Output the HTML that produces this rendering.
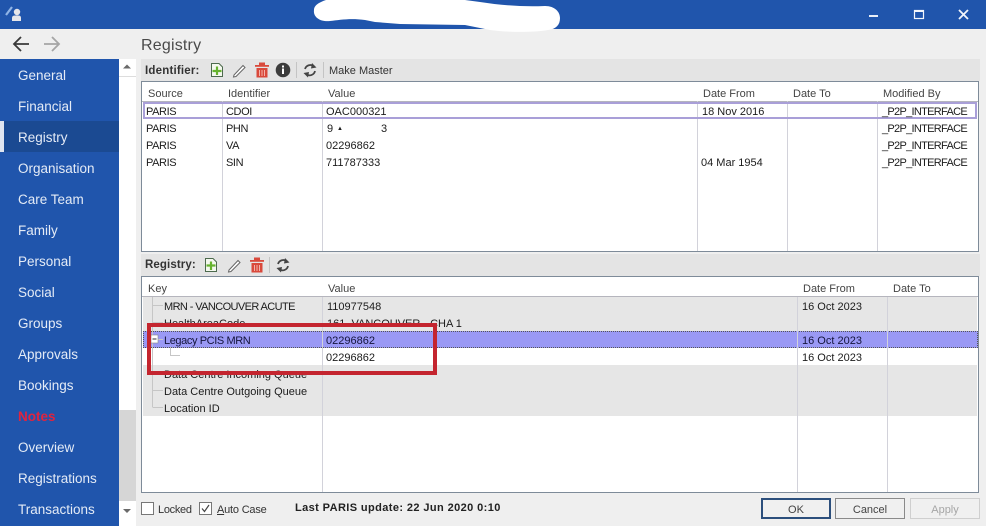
<!DOCTYPE html>
<html><head><meta charset="utf-8"><style>
html,body{margin:0;padding:0}
body{width:986px;height:526px;overflow:hidden;position:relative;background:#efefef;font-family:"Liberation Sans",sans-serif;font-size:11px;color:#1c1c1c}
.a,.t{position:absolute}
.t{white-space:nowrap;line-height:13px;margin-top:1px}
.c{letter-spacing:-.4px}
.m{letter-spacing:-.7px}
.n{position:absolute;left:18px;color:#e4ebf6;font-size:13.5px;line-height:16px;white-space:nowrap}
.h{color:#444}
.l{position:absolute;width:1px;background:#d2d2da}
.g{position:absolute;background:#e6e6e6;left:143px;width:834px}
.b{position:absolute;box-sizing:border-box;text-align:center;font-size:11px;background:#f0f0f0}
svg{position:absolute;overflow:visible}
</style></head><body>
<div class="a" style="left:0;top:0;width:986px;height:29px;background:#2055ac"></div>
<svg style="left:0;top:0" width="986" height="34">
<path d="M314 10 C314 5 320 2 326 0 L465 0 L480 2 C500 5 520 7 545 6 C555 6 560 12 560 18 C560 25 556 29 548 30 C530 33 505 32 490 30 L465 25 L400 24 L375 22 L365 20 C350 18 340 20 330 21 C320 22 313 17 314 10 Z" fill="#fff"/>
<path d="M6 15 L12 7" stroke="#8fb4e6" stroke-width="2.2"/>
<circle cx="17" cy="12" r="3.2" fill="#e6e6ea"/><path d="M12 21 V18 Q12 15.500 15 15.500 H18.500 Q21 15.500 21 18 V21 Z" fill="#e6e6ea"/>
<path d="M869 16 H878" stroke="#e8eef8" stroke-width="2"/>
<rect x="914.500" y="10.500" width="9" height="8" fill="none" stroke="#f2f5fb" stroke-width="1.200"/><path d="M914 11 H924" stroke="#f2f5fb" stroke-width="2"/>
<path d="M959 10 L968 19 M968 10 L959 19" stroke="#f2f5fb" stroke-width="1.800"/>
<path d="M29 44 H14 M21 37 L14 44 L21 51" fill="none" stroke="#3a3a3a" stroke-width="1.800"/>
<path d="M59 44 H44 M52 37 L59 44 L52 51" fill="none" stroke="#a5a5a5" stroke-width="1.800"/>
</svg>
<div class="t" style="left:141px;top:36px;font-size:16px;line-height:18px;color:#4a4a4a;letter-spacing:.2px">Registry</div>

<div class="a" style="left:0;top:59px;width:119px;height:467px;background:#2055ac"></div>
<div class="a" style="left:0;top:121px;width:119px;height:31px;background:#1b4a92"></div>
<div class="a" style="left:0;top:121px;width:4px;height:31px;background:#dfe5f0"></div>
<div class="n" style="top:68px">General</div>
<div class="n" style="top:99px">Financial</div>
<div class="n" style="top:130px">Registry</div>
<div class="n" style="top:161px">Organisation</div>
<div class="n" style="top:192px">Care Team</div>
<div class="n" style="top:223px">Family</div>
<div class="n" style="top:254px">Personal</div>
<div class="n" style="top:285px">Social</div>
<div class="n" style="top:316px">Groups</div>
<div class="n" style="top:347px">Approvals</div>
<div class="n" style="top:378px">Bookings</div>
<div class="n" style="top:409px;color:#e0243f;font-weight:bold">Notes</div>
<div class="n" style="top:440px">Overview</div>
<div class="n" style="top:471px">Registrations</div>
<div class="n" style="top:502px">Transactions</div>

<div class="a" style="left:119px;top:59px;width:17px;height:467px;background:#fff"></div>
<div class="a" style="left:119px;top:76px;width:17px;height:1px;background:#ddd"></div>
<div class="a" style="left:119px;top:410px;width:17px;height:91px;background:#d6d6d6"></div>
<svg style="left:119px;top:59px" width="17" height="467"><path d="M4 9.500 L8 5.500 L12 9.500 Z" fill="#6a6a6a"/><path d="M4 450 H12 L8 454 Z" fill="#6a6a6a"/></svg>

<!-- Identifier toolbar -->
<div class="a" style="left:141px;top:59px;width:839px;height:22px;background:#e4e4e4"></div>
<div class="t" style="left:145px;top:64px;font-weight:bold;color:#333;font-size:11.5px;letter-spacing:.2px">Identifier:</div>
<svg style="left:0;top:0" width="986" height="300">
<path d="M211.500 63.500 H219 L222.500 67 V76.500 H211.500 Z" fill="#f4f8ee" stroke="#4d6a4d"/>
<path d="M217 66.500 V75 M212.500 71 H221.500" stroke="#66b32e" stroke-width="2.200"/>
<path d="M234 75 L243 65.500 L245 67.500 L236 76.500 L233.500 77 Z" fill="#fff" stroke="#666"/>
<rect x="255" y="65" width="14" height="1.800" fill="#d9493b"/><rect x="259" y="62.500" width="6" height="2.500" fill="#d9493b"/>
<path d="M256.500 68 H267.500 V77.500 H256.500 Z" fill="#d9493b"/><path d="M259.500 70 V76 M262 70 V76 M264.500 70 V76" stroke="#f3b2aa"/>
<circle cx="283" cy="70" r="7.300" fill="#3c3c3c"/><rect x="282" y="68.500" width="2" height="5.500" fill="#fff"/><rect x="282" y="65.500" width="2" height="2" fill="#fff"/>
<path d="M296.500 62 V78 M323.500 62 V78" stroke="#c4c4c4"/>
<g fill="none" stroke="#444" stroke-width="1.800"><path d="M305 69 A5.500 5.500 0 0 1 314 66.500"/><path d="M315 71 A5.500 5.500 0 0 1 306 74"/></g>
<path d="M312 63 L316.500 67.500 L311 68.500 Z M308 77.500 L303.500 73 L309 72 Z" fill="#444"/>
</svg>
<div class="t" style="left:329px;top:64px;color:#333">Make Master</div>

<!-- Table 1 -->
<div class="a" style="left:141px;top:81px;width:838px;height:171px;box-sizing:border-box;border:1px solid #7e8b99;background:#fff"></div>
<div class="a" style="left:142px;top:101px;width:836px;height:1px;background:#b5b5bd"></div>
<div class="l" style="left:222px;top:101px;height:150px"></div>
<div class="l" style="left:322px;top:101px;height:150px"></div>
<div class="l" style="left:697px;top:101px;height:150px"></div>
<div class="l" style="left:787px;top:101px;height:150px"></div>
<div class="l" style="left:877px;top:101px;height:150px"></div>
<div class="a" style="left:143px;top:102px;width:834px;height:17px;box-sizing:border-box;border:2px solid #a99fd8"></div>
<div class="t h" style="left:148px;top:87px">Source</div><div class="t h" style="left:228px;top:87px">Identifier</div><div class="t h" style="left:328px;top:87px">Value</div><div class="t h" style="left:703px;top:87px">Date From</div><div class="t h" style="left:793px;top:87px">Date To</div><div class="t h" style="left:883px;top:87px">Modified By</div>
<div class="t c" style="left:146px;top:105px">PARIS</div><div class="t c" style="left:226px;top:105px">CDOI</div><div class="t" style="left:326px;top:105px">OAC000321</div><div class="t" style="left:702px;top:105px">18 Nov 2016</div><div class="t m" style="left:882px;top:105px">_P2P_INTERFACE</div>
<div class="t c" style="left:146px;top:122px">PARIS</div><div class="t c" style="left:226px;top:122px">PHN</div><div class="t" style="left:327px;top:122px">9</div><div class="t" style="left:337px;top:122px;font-size:6px">▲</div><div class="t" style="left:381px;top:122px">3</div><div class="t m" style="left:882px;top:122px">_P2P_INTERFACE</div>
<div class="t c" style="left:146px;top:139px">PARIS</div><div class="t c" style="left:226px;top:139px">VA</div><div class="t" style="left:326px;top:139px">02296862</div><div class="t m" style="left:882px;top:139px">_P2P_INTERFACE</div>
<div class="t c" style="left:146px;top:156px">PARIS</div><div class="t c" style="left:226px;top:156px">SIN</div><div class="t" style="left:326px;top:156px">711787333</div><div class="t" style="left:701px;top:156px">04 Mar 1954</div><div class="t m" style="left:882px;top:156px">_P2P_INTERFACE</div>

<!-- Registry toolbar -->
<div class="a" style="left:141px;top:254px;width:839px;height:22px;background:#e4e4e4"></div>
<svg style="left:0;top:0;z-index:2" width="986" height="300">
<path d="M205.500 258.500 H213 L216.500 262 V271.500 H205.500 Z" fill="#f4f8ee" stroke="#4d6a4d"/>
<path d="M211 261.500 V270 M206.500 265.500 H215.500" stroke="#66b32e" stroke-width="2.200"/>
<path d="M229 270 L238 260.500 L240 262.500 L231 271.500 L228.500 272 Z" fill="#fff" stroke="#666"/>
<rect x="250" y="260" width="14" height="1.800" fill="#d9493b"/><rect x="254" y="257.500" width="6" height="2.500" fill="#d9493b"/>
<path d="M251.500 263 H262.500 V272.500 H251.500 Z" fill="#d9493b"/><path d="M254.500 265 V271 M257 265 V271 M259.500 265 V271" stroke="#f3b2aa"/>
<path d="M269.500 257 V273" stroke="#c4c4c4"/>
<g fill="none" stroke="#444" stroke-width="1.800"><path d="M278 264 A5.500 5.500 0 0 1 287 261.500"/><path d="M288 266 A5.500 5.500 0 0 1 279 269"/></g>
<path d="M285 258 L289.500 262.500 L284 263.500 Z M281 272.500 L276.500 268 L282 267 Z" fill="#444"/>
</svg>
<div class="t" style="left:145px;top:258px;font-weight:bold;color:#333;font-size:11.5px;letter-spacing:.1px">Registry:</div>

<!-- Table 2 -->
<div class="a" style="left:141px;top:276px;width:838px;height:217px;box-sizing:border-box;border:1px solid #7e8b99;background:#fff"></div>
<div class="a" style="left:142px;top:296px;width:836px;height:1px;background:#b5b5bd"></div>
<div class="g" style="top:297px;height:34px"></div>
<div class="a" style="left:143px;top:348px;width:834px;height:17px;background:#fff"></div>
<div class="g" style="top:365px;height:51px"></div>
<div class="a" style="left:143px;top:331px;width:835px;height:17px;box-sizing:border-box;background:#9a99f5;border:1px dotted #555"></div>
<div class="l" style="left:322px;top:297px;height:195px"></div>
<div class="l" style="left:797px;top:297px;height:195px"></div>
<div class="l" style="left:887px;top:297px;height:195px"></div>
<div class="t h" style="left:148px;top:282px">Key</div><div class="t h" style="left:328px;top:282px">Value</div><div class="t h" style="left:803px;top:282px">Date From</div><div class="t h" style="left:893px;top:282px">Date To</div>
<svg style="left:0;top:0" width="986" height="526">
<path d="M152.500 297 V407.500 M153 305.500 H163 M153 322.500 H163 M158 339.500 H163 M170.500 347 V355.500 H180 M153 373.500 H163 M153 390.500 H163 M153 407.500 H163" stroke="#c6c6c6" fill="none"/>
<rect x="151" y="335" width="7" height="8" fill="#fff" stroke="#888" stroke-width=".6"/><path d="M152.500 339 H156.500" stroke="#333"/>
</svg>
<div class="t" style="left:164px;top:300px;letter-spacing:-.6px">MRN - VANCOUVER ACUTE</div><div class="t" style="left:327px;top:300px">110977548</div><div class="t" style="left:802px;top:300px">16 Oct 2023</div>
<div class="t" style="left:164px;top:317px">HealthAreaCode</div><div class="t" style="left:327px;top:317px">161&nbsp; VANCOUVER - CHA 1</div>
<div class="t" style="left:164px;top:334px;color:#14143c;letter-spacing:-.4px">Legacy PCIS MRN</div><div class="t" style="left:326px;top:334px;color:#14143c">02296862</div><div class="t" style="left:802px;top:334px;color:#14143c">16 Oct 2023</div>
<div class="t" style="left:326px;top:351px">02296862</div><div class="t" style="left:802px;top:351px">16 Oct 2023</div>
<div class="t" style="left:164px;top:368px">Data Centre Incoming Queue</div>
<div class="t" style="left:164px;top:385px">Data Centre Outgoing Queue</div>
<div class="t" style="left:164px;top:402px">Location ID</div>
<div class="a" style="left:147px;top:323px;width:290px;height:52px;box-sizing:border-box;border:4px solid #c4252f"></div>

<!-- Footer -->
<div class="a" style="left:141px;top:502px;width:13px;height:13px;box-sizing:border-box;border:1px solid #777;background:#fff"></div>
<div class="t" style="left:158px;top:503px;color:#333;letter-spacing:-.3px">Locked</div>
<div class="a" style="left:199px;top:502px;width:13px;height:13px;box-sizing:border-box;border:1px solid #777;background:#fff"></div>
<svg style="left:199px;top:502px" width="13" height="13"><path d="M3 6.500 L5.500 9.500 L10 3" fill="none" stroke="#444" stroke-width="1.200"/></svg>
<div class="t" style="left:217px;top:503px;color:#333;letter-spacing:-.2px"><u>A</u>uto Case</div>
<div class="t" style="left:295px;top:501px;font-weight:bold;color:#222;letter-spacing:.4px">Last PARIS update: 22 Jun 2020 0:10</div>
<div class="b" style="left:761px;top:498px;width:70px;height:21px;border:2px solid #2c4f7c;line-height:20px;color:#444">OK</div>
<div class="b" style="left:835px;top:498px;width:70px;height:21px;border:1px solid #8a8a8a;line-height:22px;color:#444">Cancel</div>
<div class="b" style="left:910px;top:498px;width:70px;height:21px;border:1px solid #cfcfcf;line-height:22px;color:#a5a5a5">Apply</div>
</body></html>
